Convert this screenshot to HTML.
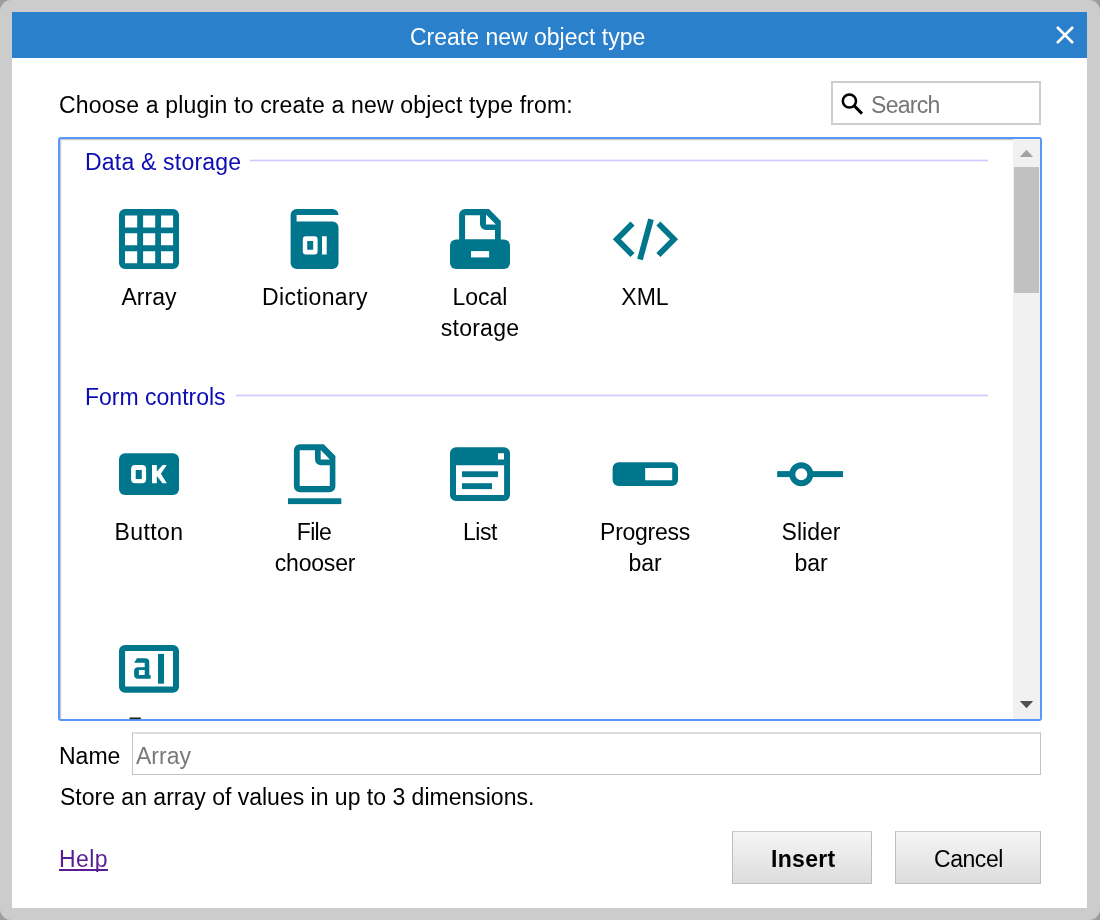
<!DOCTYPE html>
<html><head><meta charset="utf-8">
<style>
html,body{margin:0;padding:0;}
body{width:1100px;height:920px;position:relative;overflow:hidden;background:#9c9c9c;font-family:"Liberation Sans",sans-serif;}
#frame{position:absolute;left:0;top:0;width:1100px;height:920px;background:#cccccc;border-radius:11px;}
#dlg{position:absolute;left:12px;top:12px;width:1075px;height:896px;background:#fff;}
#title{position:absolute;left:12px;top:12px;width:1075px;height:46px;background:#2b80cc;}
.t{position:absolute;white-space:nowrap;font-size:23px;line-height:23px;color:#000;will-change:transform;}
.c{text-align:center;width:200px;}
#search{position:absolute;left:831px;top:81px;width:205.6px;height:40.4px;border:2px solid #cdcdcd;}
#list{position:absolute;left:58px;top:137px;width:980px;height:580px;border:2px solid #5a97f8;border-radius:3px;box-shadow:inset 1px 1px 0 #c3c8d1,inset 2px 2px 0 #f4f4f4;}
#track{position:absolute;left:1013px;top:139px;width:27px;height:580px;background:#f1f1f1;}
#thumb{position:absolute;left:1014px;top:167px;width:25px;height:126px;background:#c1c1c1;}
.hline{position:absolute;height:1px;background:#ccccff;box-shadow:0 1px 0 #ededff,0 -1px 0 #ededff;}
#name{position:absolute;left:132px;top:732px;width:907px;height:40px;border:1px solid #c2c2c2;border-top:2px solid #dedede;}
.btn{position:absolute;top:831px;height:51px;border:1px solid #bdbdbd;border-top-color:#cdcdcd;background:linear-gradient(#f6f6f6,#dcdcdc);}
</style></head>
<body>
<div id="frame"></div>
<div id="dlg"></div>
<div id="title"></div>
<div class="t" style="left:410px;top:26px;color:#fff;">Create new object type</div>

<div class="t" style="left:59px;top:94px;letter-spacing:0.155px;">Choose a plugin to create a new object type from:</div>
<div id="search"></div>
<div class="t" style="left:870.5px;top:94px;color:#767676;letter-spacing:-0.7px;">Search</div>

<div id="list"></div>
<div id="track"></div>
<div id="thumb"></div>

<div class="t" style="left:84.5px;top:151px;color:#0c0cb4;letter-spacing:0.2px;">Data &amp; storage</div>
<div class="hline" style="left:250px;top:160px;width:738px;"></div>
<div class="t c" style="left:49px;top:286px;">Array</div>
<div class="t c" style="left:215px;top:286px;letter-spacing:0.35px;">Dictionary</div>
<div class="t c" style="left:380px;top:286px;">Local</div>
<div class="t c" style="left:380px;top:317px;letter-spacing:0.25px;">storage</div>
<div class="t c" style="left:545px;top:286px;">XML</div>

<div class="t" style="left:85px;top:386px;color:#0c0cb4;">Form controls</div>
<div class="hline" style="left:236px;top:395px;width:752px;"></div>
<div class="t c" style="left:49px;top:521px;letter-spacing:0.45px;">Button</div>
<div class="t c" style="left:214px;top:521px;letter-spacing:-0.7px;">File</div>
<div class="t c" style="left:214.5px;top:552px;letter-spacing:-0.2px;">chooser</div>
<div class="t c" style="left:379.5px;top:521px;letter-spacing:-0.4px;">List</div>
<div class="t c" style="left:545px;top:521px;letter-spacing:-0.28px;">Progress</div>
<div class="t c" style="left:545px;top:552px;">bar</div>
<div class="t c" style="left:711px;top:521px;">Slider</div>
<div class="t c" style="left:711px;top:552px;">bar</div>

<div class="t" style="left:58.5px;top:745px;">Name</div>
<div id="name"></div>
<div class="t" style="left:136px;top:745px;color:#7a7a7a;">Array</div>
<div class="t" style="left:60px;top:786px;">Store an array of values in up to 3 dimensions.</div>

<div class="t" style="left:59px;top:848px;color:#581c93;letter-spacing:0.4px;text-decoration:underline;text-decoration-skip-ink:none;">Help</div>
<div class="btn" style="left:732px;width:138px;"></div>
<div class="btn" style="left:895px;width:144px;"></div>
<div class="t" style="left:770.5px;top:848px;font-weight:bold;color:#000;letter-spacing:0.3px;">Insert</div>
<div class="t" style="left:934px;top:848px;color:#000;letter-spacing:-0.45px;">Cancel</div>

<svg width="1100" height="920" style="position:absolute;left:0;top:0;">
<g fill="#00768c">
<!-- close -->
<!-- array -->
<path fill-rule="evenodd" d="M125,209H173A6,6 0 0 1 179,215V263A6,6 0 0 1 173,269H125A6,6 0 0 1 119,263V215A6,6 0 0 1 125,209Z M125,215.4V227.4H137.2V215.4Z M143.1,215.4V227.4H155.2V215.4Z M161,215.4V227.4H173.1V215.4Z M125,233.3V245.3H137.2V233.3Z M143.1,233.3V245.3H155.2V233.3Z M161,233.3V245.3H173.1V233.3Z M125,251.2V263.2H137.2V251.2Z M143.1,251.2V263.2H155.2V251.2Z M161,251.2V263.2H173.1V251.2Z"/>
<!-- dictionary -->
<path d="M290.6,215A6,6 0 0 1 296.6,209H332.5A6,6 0 0 1 338.5,215H296.6V221.5H332.5A6,6 0 0 1 338.5,227.5V263A6,6 0 0 1 332.5,269H296.6A6,6 0 0 1 290.6,263Z"/>
<path fill="#fff" fill-rule="evenodd" d="M305.8,236.3H314.6A3,3 0 0 1 317.6,239.3V251.5A3,3 0 0 1 314.6,254.5H305.8A3,3 0 0 1 302.8,251.5V239.3A3,3 0 0 1 305.8,236.3Z M307.2,240.9V249.8H313.2V240.9Z M322,236.3H326.7V254.5H322Z"/>
<!-- local storage -->
<path d="M456,239.6H504A6,6 0 0 1 510,245.6V263A6,6 0 0 1 504,269H456A6,6 0 0 1 450,263V245.6A6,6 0 0 1 456,239.6Z"/>
<rect x="471" y="251.1" width="18.1" height="6.3" fill="#fff"/>
<path fill-rule="evenodd" d="M459.1,242V215.1A6,6 0 0 1 465.1,209.1H489L500.8,221V242Z M465.1,239.6V215.2H480V224A6,6 0 0 0 486,230H495V239.6Z M486,214.6L495.9,224.5H486Z"/>
<!-- xml -->
<g fill="none" stroke="#00768c" stroke-width="5.8" stroke-linejoin="miter">
<path d="M632.5,223.5L616.9,239.3L632.5,255"/>
<path d="M658.4,223.5L674,239.3L658.4,255"/>
<path d="M651,219.3L640,259.5"/>
</g>
<!-- button OK -->
<path d="M125,453.2H173A6,6 0 0 1 179,459.2V489A6,6 0 0 1 173,495H125A6,6 0 0 1 119,489V459.2A6,6 0 0 1 125,453.2Z"/>
<path fill="#fff" fill-rule="evenodd" d="M135.1,465H142.1A4,4 0 0 1 146.1,469V479.2A4,4 0 0 1 142.1,483.2H135.1A4,4 0 0 1 131.1,479.2V469A4,4 0 0 1 135.1,465Z M135.7,470V478.9H141.8V470Z M152,465H156.8V471.6L162.7,465H166.8L160.9,473.7L166.8,483.2H162.5L156.8,476V483.2H152Z"/>
<!-- file chooser -->
<path fill-rule="evenodd" d="M299.9,444.3H323.7L335.4,456.1V486.2A6,6 0 0 1 329.4,492.2H299.9A6,6 0 0 1 293.9,486.2V450.3A6,6 0 0 1 299.9,444.3Z M299.7,450.2V486.1H329.8V465.2H321A6,6 0 0 1 315,459.2V450.2Z M320.7,450L329.9,459.6H320.7Z"/>
<rect x="288" y="498.3" width="53.3" height="5.8"/>
<!-- list -->
<path fill-rule="evenodd" d="M456,447.2H504A6,6 0 0 1 510,453.2V495.1A6,6 0 0 1 504,501.1H456A6,6 0 0 1 450,495.1V453.2A6,6 0 0 1 456,447.2Z M456,465.2V495H504.1V465.2Z M498,453.3V459.6H504V453.3Z"/>
<rect x="462" y="471.3" width="36" height="5.8"/>
<rect x="462" y="483.2" width="30" height="5.9"/>
<!-- progress -->
<path fill-rule="evenodd" d="M618.6,462.2H672A6,6 0 0 1 678,468.2V480.1A6,6 0 0 1 672,486.1H618.6A6,6 0 0 1 612.6,480.1V468.2A6,6 0 0 1 618.6,462.2Z M645.2,468V480.3H672.2V468Z"/>
<!-- slider -->
<rect x="777.2" y="471.1" width="65.8" height="6"/>
<circle cx="801.3" cy="474.2" r="9" fill="#fff" stroke="#00768c" stroke-width="6"/>
<!-- text input -->
<path fill-rule="evenodd" d="M125,645H173A6,6 0 0 1 179,651V686.8A6,6 0 0 1 173,692.8H125A6,6 0 0 1 119,686.8V651A6,6 0 0 1 125,645Z M125.1,651.1V686.4H173V651.1Z"/>
<rect x="158" y="653.9" width="6" height="29.8"/>
<path fill-rule="evenodd" d="M134.1,662.8L137,658.3H145.3A4,4 0 0 1 149.3,662.3V675H150.6V678.7H138.1A4,4 0 0 1 134.1,674.7V671.2A4,4 0 0 1 138.1,667.2H144.7V662.8Z M138.9,670H144.7V675H138.9Z"/>
</g>
<!-- partially visible label -->
<rect x="129.5" y="717.5" width="11.3" height="1.6" fill="#1e1e1e"/>
<!-- close X -->
<g stroke="#fff" stroke-width="2.5" fill="none">
<path d="M1057,27L1073,43M1073,27L1057,43"/>
</g>
<!-- magnifier -->
<g stroke="#000" fill="none">
<circle cx="849.4" cy="101" r="6.6" stroke-width="2.5"/>
<path d="M854.3,105.9L862,113.6" stroke-width="2.9"/>
</g>
<!-- scroll arrows -->
<path d="M1019.8,156.9L1026.5,149.8L1033.2,156.9Z" fill="#a3a3a3"/>
<path d="M1019.8,700.9L1026.5,708.3L1033.2,700.9Z" fill="#505050"/>
</svg>
</body></html>
